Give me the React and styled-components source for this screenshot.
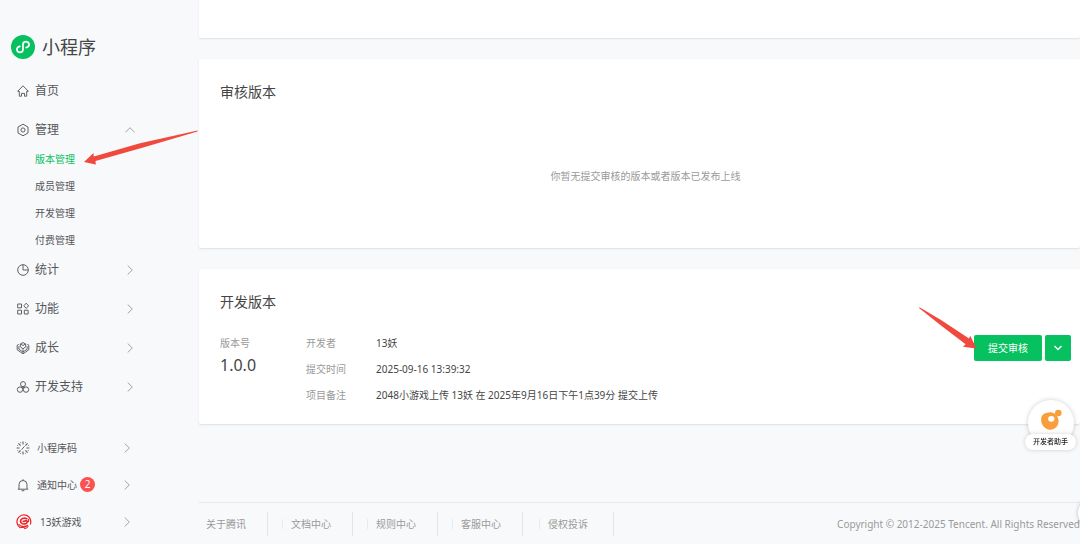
import React from 'react';
import styled, { createGlobalStyle } from 'styled-components';

const GlobalStyle = createGlobalStyle`
  * {
    box-sizing: border-box;
  }
  body {
    margin: 0;
    overflow: hidden;
    background: #f8f9fb;
    color: #454545;
    font-family: "Noto Sans", "Noto Sans CJK SC", sans-serif;
    font-size: 10px;
    line-height: 16px;
  }
  a {
    color: inherit;
    text-decoration: none;
  }
  button {
    font: inherit;
    border: 0;
    padding: 0;
    cursor: pointer;
  }
  ul, dl, dd, h1, h2, p {
    margin: 0;
    padding: 0;
    list-style: none;
    font-weight: 400;
  }
`;

const Page = styled.div`
  display: flex;
  min-height: 100vh;
`;

const Sidebar = styled.aside`
  flex: none;
  width: 199px;
  padding-top: 34px;
`;

const Brand = styled.h1`
  display: flex;
  align-items: center;
  gap: 7px;
  height: 26px;
  padding-left: 11px;
  font-size: 18px;
`;

const Menu = styled.ul`
  padding-top: 15px;
`;

const MenuItem = styled.li`
  margin-bottom: ${(props) => props.$open ? '0' : '7px'};
`;

const MenuButton = styled.button`
  display: flex;
  align-items: center;
  width: 144px;
  height: 32px;
  padding: 0 8px 0 16px;
  background: none;
  color: #55565a;
  font-size: 12px;
  text-align: left;
  > span {
    flex: 1;
    padding-left: 5px;
  }
`;

const SubLink = styled.a`
  display: block;
  width: 76px;
  margin-left: 35px;
  line-height: 27px;
  position: relative;
  color: ${(props) => props.$active ? '#07c160' : '#55565a'};
`;

const ToolMenu = styled.ul`
  padding-top: 19px;
`;

const ToolButton = styled(MenuButton)`
  width: 141px;
  height: 37px;
  font-size: 10px;
  > span {
    display: flex;
    align-items: center;
    gap: 3px;
    padding-left: ${(props) => props.$avatar ? '8px' : '7px'};
  }
`;

const Badge = styled.b`
  min-width: 15px;
  height: 15px;
  border-radius: 8px;
  background: #fa5151;
  color: #fff;
  font-weight: 400;
  line-height: 15px;
  text-align: center;
`;

const Main = styled.main`
  flex: 1;
  min-width: 0;
`;

const Card = styled.section`
  margin-bottom: 21px;
  padding: 21px 9px 21px 21px;
  border-radius: 2px;
  background: #fff;
  box-shadow: 0 1px 2px rgba(0, 0, 0, 0.1);
`;

const LiveCard = styled(Card)`
  padding: 17px 0 21px;
`;

const CardTitle = styled.h2`
  font-size: 14px;
  line-height: 24px;
`;

const Empty = styled.p`
  padding: 64px 0 43px;
  color: #9a9a9a;
  text-align: center;
`;

const Version = styled.div`
  display: flex;
  align-items: flex-start;
  padding-top: 21px;
`;

const VersionNumber = styled.div`
  width: 86px;
  color: #9a9a9a;
  strong {
    display: block;
    padding-top: 2px;
    color: #454545;
    font-size: 16px;
    font-weight: 400;
    line-height: 24px;
  }
`;

const Details = styled.dl`
  display: grid;
  flex: 1;
  grid-template-columns: 70px 1fr;
  row-gap: 10px;
  dt {
    color: #9a9a9a;
  }
`;

const Actions = styled.div`
  display: flex;
  gap: 3px;
  position: relative;
`;

const GreenButton = styled.button`
  display: flex;
  align-items: center;
  justify-content: center;
  min-width: 26px;
  height: 26px;
  padding: 0 ${(props) => props.$icon ? '0' : '14px'};
  border-radius: 2px;
  background: #07c160;
  color: #fff;
`;

const Footer = styled.footer`
  display: flex;
  align-items: center;
  margin-top: 78px;
  padding-top: 9px;
  border-top: 1px solid #e7e8ea;
  color: #9a9a9a;
  white-space: nowrap;
`;

const FooterLinks = styled.ul`
  display: flex;
  flex: 1;
  padding-left: 7px;
`;

const FooterItem = styled.li`
  display: flex;
  align-items: center;
  height: 24px;
  padding-right: 21px;
  border-right: 1px solid #e4e5e7;
  & + & a {
    margin-left: 14px;
    padding-left: 8px;
    border-left: 1px solid #e9eaec;
    line-height: 10px;
  }
  &:last-child {
    padding-right: 25px;
  }
  & + &:last-child a {
    margin-left: 16px;
  }
`;

const Copyright = styled.p`
  flex: none;
`;

const Helper = styled.button`
  position: fixed;
  right: 4px;
  bottom: 94px;
  display: flex;
  flex-direction: column;
  align-items: center;
  background: none;
  color: #222;
`;

const HelperFace = styled.span`
  width: 46px;
  height: 46px;
  padding: 8px 10px;
  border-radius: 50%;
  background: #fff;
  box-shadow: 0 0 5px rgba(0, 0, 0, 0.2);
`;

const HelperLabel = styled.span`
  margin-top: -12px;
  padding: 0 8px;
  border-radius: 8px;
  background: #fff;
  box-shadow: 0 0 4px rgba(0, 0, 0, 0.18);
  font-size: 7px;
  font-weight: 500;
`;

const SideBubble = styled.button`
  position: fixed;
  right: -28px;
  bottom: 16px;
  width: 30px;
  height: 30px;
  border-radius: 50%;
  background: #fff;
  box-shadow: 0 0 4px rgba(0, 0, 0, 0.25);
`;

const Pointer = styled.svg`
  position: absolute;
  left: ${(props) => props.$left};
  top: ${(props) => props.$top};
  fill: #f04a3e;
  pointer-events: none;
`;

const LineIcon = styled.svg`
  flex: none;
  fill: none;
  stroke: ${(props) => props.$color || '#5f6064'};
  stroke-width: ${(props) => props.$weight || 1};
`;

const Icon = ({ children }) => (
  <LineIcon width="14" height="14" viewBox="0 0 14 14" aria-hidden="true">{children}</LineIcon>
);

const icons = {
  home: <path d="M1.6 7.3 7 1.8l5.4 5.5H10.7v4.9H8.5V9.4h-3v2.8H3.3V7.3Z" strokeLinejoin="round" />,
  manage: (
    <>
      <path d="M7 1.2 12 4v6L7 12.8 2 10V4Z" strokeLinejoin="round" />
      <circle cx="7" cy="7" r="2.1" />
    </>
  ),
  stats: (
    <>
      <circle cx="7" cy="7" r="5.3" />
      <path d="M7 1.7V7h5.3" />
    </>
  ),
  features: (
    <>
      <path d="M1.7 2h3.8v3.8H1.7ZM1.7 8.2h3.8V12H1.7ZM8.3 8.2h3.8V12H8.3Z" />
      <path d="M10.2 1.2 12.6 3.8 10.2 6.4 7.8 3.8Z" />
    </>
  ),
  growth: (
    <>
      <path d="M7 12.8V8.2M7 7.8 4.3 5.8V3L7 1.6 9.7 3v2.8ZM4.5 3 7 4.5 9.5 3" />
      <path d="M2.7 3.3 1.2 4.2V8.8L7 12.8l5.8-4V4.2L11.3 3.3M2.9 5.2v3L7 11l4.1-2.8v-3" />
    </>
  ),
  support: (
    <>
      <circle cx="7" cy="4.1" r="2.5" />
      <circle cx="4" cy="9.6" r="2.7" />
      <circle cx="10" cy="9.6" r="2.7" />
      <path d="M5.8 6.2 7 8.1l1.2-1.9" />
    </>
  ),
  code: (
    <>
      <path d="M7 .6v3M7 10.4v3M.6 7h3M10.400 7h3M2.400 2.400l2.200 2.200M9.400 9.400l2.200 2.200M2.400 11.600l2.200-2.200M11.600 2.400 9.400 4.600" strokeWidth="1.100" />
      <path d="M4.300 1l.5 1.200M9.700 1l-.5 1.200M1 4.300l1.200.5M1 9.700l1.200-.5M4.300 13l.5-1.200M9.700 13l-.5-1.200M13 9.700l-1.200-.5M13 4.300l-1.200.5" strokeWidth=".6" />
      <path d="M5.600 8.700 8.500 5.300" />
    </>
  ),
  bell: (
    <>
      <path d="M1.800 11.200h10.400M3 11V6.500a4 4 0 0 1 8 0V11M7 2.500V1.200" />
      <path d="M5.600 12.700h2.800" />
    </>
  ),
};

const Avatar = () => (
  <svg width="16" height="16" viewBox="0 0 16 16" aria-hidden="true">
    <circle cx="8" cy="8" r="8" fill="#fff" />
    <g fill="none" stroke="#e8262d" strokeLinecap="round">
      <path d="M4.200 13.600A6.900 6.900 0 1 1 14.400 10" strokeWidth="1.300" />
      <path d="M10.800 4.700C7.800 3.300 4.600 4.700 4.500 7.300c0 2.600 3.300 3.200 5.600 2.200 1.800-.9 1.300-3-.3-2.800-1.200.1-1.600 1.200-2.600.6" strokeWidth="1.700" />
      <path d="M2.900 10.400c2 2.200 5.600 2.500 9 .9M4.800 13.200c1.900.4 3.700.2 5.400-.7M12.600 5.300v2.500M8.300 14.800c1.600-.2 2.900-1 3.700-2.300" strokeWidth="1.100" />
    </g>
  </svg>
);

const Chevron = ({ up }) => (
  <LineIcon $color="#a3a4a7" width="12" height="12" viewBox="0 0 12 12" aria-hidden="true">
    <path d={up ? 'M1.5 8.3 6 3.7l4.5 4.6' : 'M3.7 1.5 8.3 6l-4.6 4.5'} />
  </LineIcon>
);

const Logo = () => (
  <svg width="24" height="24" viewBox="0 0 24 24" aria-hidden="true">
    <circle cx="12" cy="12" r="12" fill="#07c160" />
    <path
      d="M15.2 12.6c1.6-.4 2.9-1.6 2.9-3.1 0-1.6-1.4-2.8-3.1-2.8s-3 1.2-3 2.8v5c0 1.6-1.4 2.8-3 2.8s-3.1-1.2-3.1-2.8c0-1.5 1.3-2.7 2.9-3.1"
      fill="none"
      stroke="#fff"
      strokeWidth="1.7"
      strokeLinecap="round"
    />
  </svg>
);

const menu = [
  { label: '首页', icon: 'home', leaf: true },
  { label: '管理', icon: 'manage', children: ['版本管理', '成员管理', '开发管理', '付费管理'] },
  { label: '统计', icon: 'stats' },
  { label: '功能', icon: 'features' },
  { label: '成长', icon: 'growth' },
  { label: '开发支持', icon: 'support' },
];

const footerLinks = ['关于腾讯', '文档中心', '规则中心', '客服中心', '侵权投诉'];

const SideMenu = () => (
  <Menu>
    {menu.map((item) => (
      <MenuItem key={item.label} $open={item.children}>
        <MenuButton>
          <Icon>{icons[item.icon]}</Icon>
          <span>{item.label}</span>
          {!item.leaf && <Chevron up={item.children} />}
        </MenuButton>
        {item.children && item.children.map((child, index) => (
          <SubLink key={child} href="#" $active={index === 0}>
            {child}
            {index === 0 && (
              <Pointer $left="49px" $top="-17px" width="115" height="36" viewBox="0 0 115 36">
                <path d="M0 33 9.500 24 9.800 27.400 56 14.200 113.500 1.400 113.500 2.600 60 18.200 11.500 32 11.800 35.500Z" />
              </Pointer>
            )}
          </SubLink>
        ))}
      </MenuItem>
    ))}
  </Menu>
);

export default () => {
  return (
    <Page>
      <GlobalStyle />
      <Sidebar>
        <Brand><Logo />小程序</Brand>
        <SideMenu />
        <ToolMenu>
          <li><ToolButton><Icon>{icons.code}</Icon><span>小程序码</span><Chevron /></ToolButton></li>
          <li><ToolButton><Icon>{icons.bell}</Icon><span>通知中心<Badge>2</Badge></span><Chevron /></ToolButton></li>
          <li><ToolButton $avatar><Avatar /><span>13妖游戏</span><Chevron /></ToolButton></li>
        </ToolMenu>
      </Sidebar>
      <Main>
        <LiveCard />
        <Card>
          <CardTitle>审核版本</CardTitle>
          <Empty>你暂无提交审核的版本或者版本已发布上线</Empty>
        </Card>
        <Card>
          <CardTitle>开发版本</CardTitle>
          <Version>
            <VersionNumber>版本号<strong>1.0.0</strong></VersionNumber>
            <Details>
              <dt>开发者</dt>
              <dd>13妖</dd>
              <dt>提交时间</dt>
              <dd>2025-09-16 13:39:32</dd>
              <dt>项目备注</dt>
              <dd>2048小游戏上传 13妖 在 2025年9月16日下午1点39分 提交上传</dd>
            </Details>
            <Actions>
              <GreenButton>提交审核</GreenButton>
              <GreenButton $icon aria-label="更多">
                <LineIcon $color="#fff" $weight="1.5" width="10" height="10" viewBox="0 0 10 10">
                  <path d="M1.5 3 5 6.5 8.5 3" />
                </LineIcon>
              </GreenButton>
              <Pointer $left="-55px" $top="-28px" width="58" height="42" viewBox="0 0 58 42">
                <path d="M.5.2 22 13 50 31.5 51.2 28.8 57.5 41.5 44 39.8 46.6 37.2 22 18.5 0 1Z" />
              </Pointer>
            </Actions>
          </Version>
        </Card>
        <Footer>
          <FooterLinks>
            {footerLinks.map((label) => (
              <FooterItem key={label}><a href="#">{label}</a></FooterItem>
            ))}
          </FooterLinks>
          <Copyright>Copyright © 2012-2025 Tencent. All Rights Reserved</Copyright>
        </Footer>
      </Main>
      <Helper>
        <HelperFace>
          <svg width="24" height="24" viewBox="0 0 24 24" aria-hidden="true">
            <path d="M10 4.5C15 3.500 19.600 8 19.600 13 19.600 18 15.500 22 10.800 21.700 6 21.400 2 17 2.100 11.500 2.100 7 5 4.800 10 4.500Z" fill="#fa9d3b" />
            <ellipse cx="12.300" cy="10.800" rx="3.200" ry="2.900" fill="#fff" />
            <circle cx="19.300" cy="5" r="3.300" fill="#fa9d3b" />
          </svg>
        </HelperFace>
        <HelperLabel>开发者助手</HelperLabel>
      </Helper>
      <SideBubble aria-label="反馈" />
    </Page>
  );
};
